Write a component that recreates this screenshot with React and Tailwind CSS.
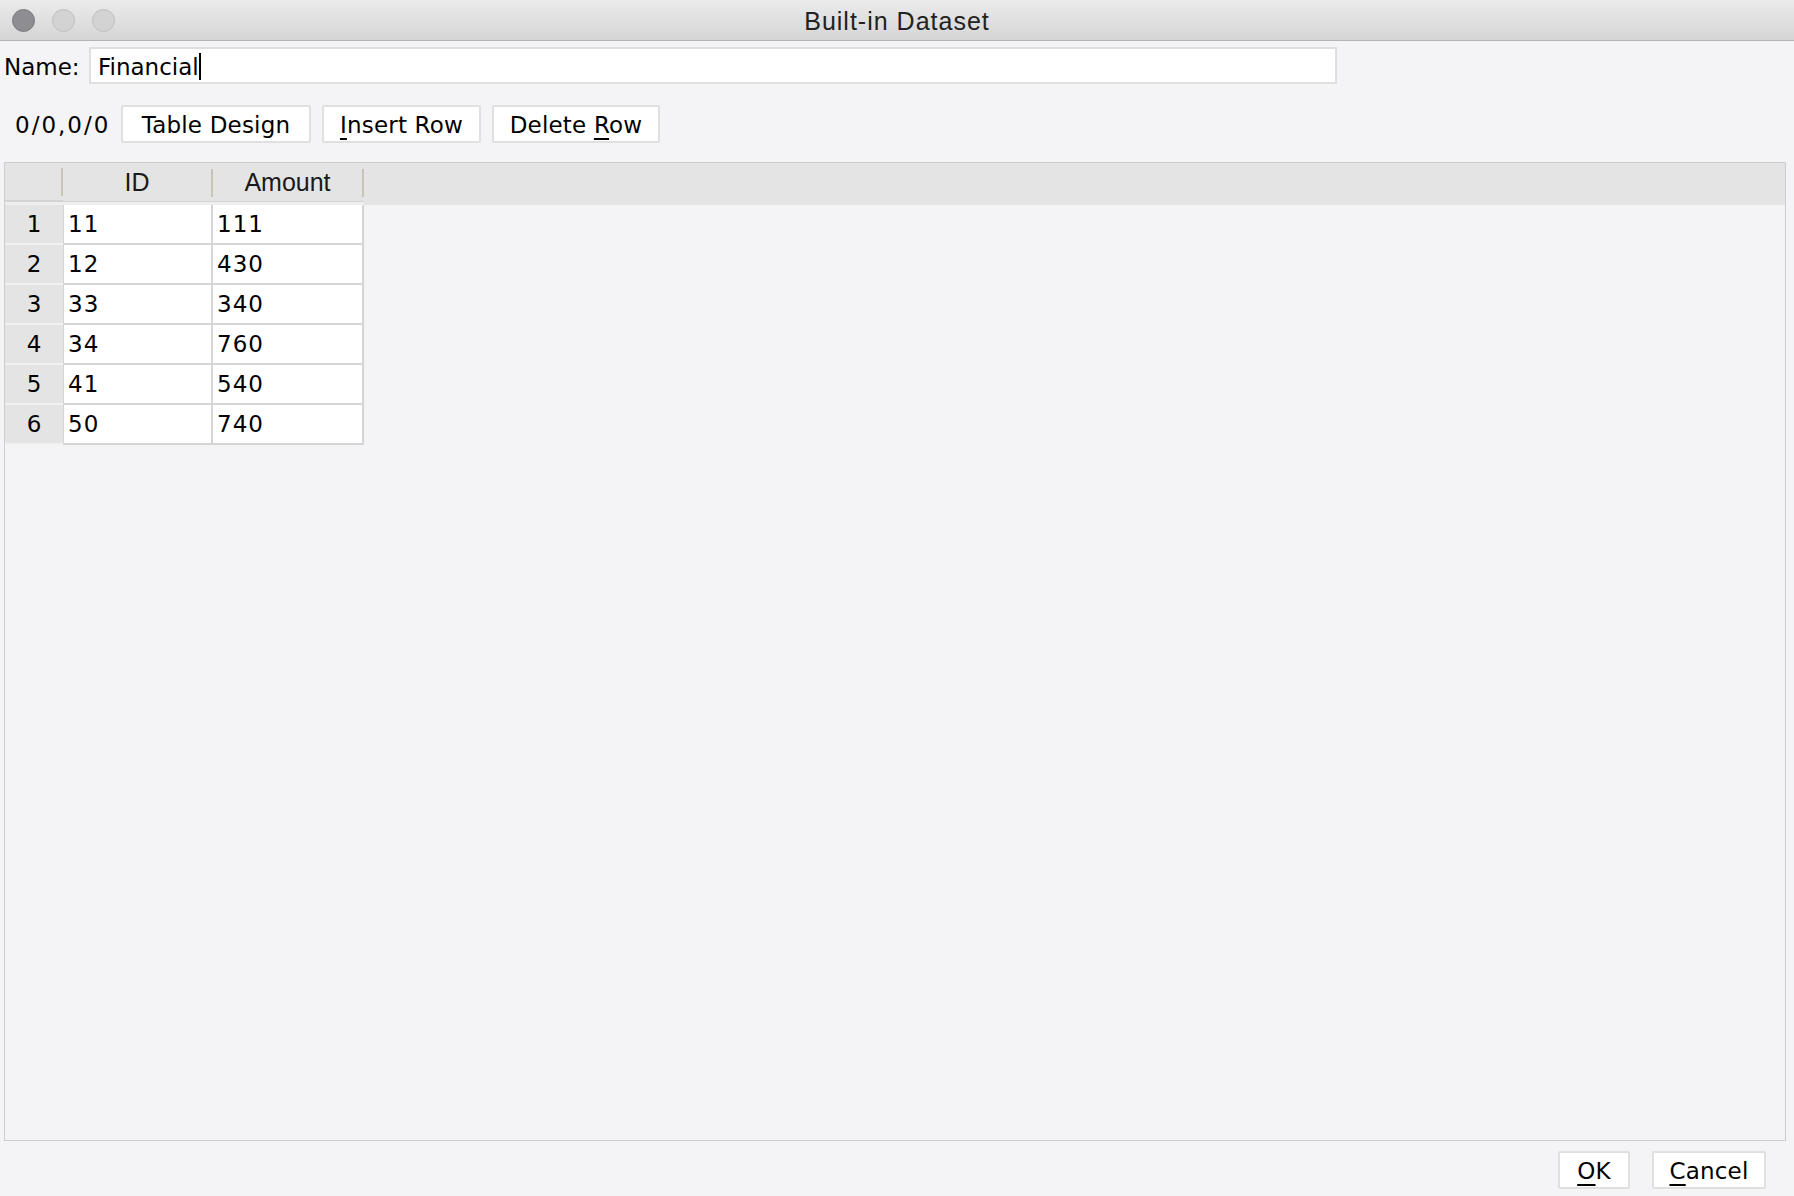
import React from 'react';

const rows = [
  ['1', '11', '111'],
  ['2', '12', '430'],
  ['3', '33', '340'],
  ['4', '34', '760'],
  ['5', '41', '540'],
  ['6', '50', '740'],
];

// mnemonic letter, underlined like a Swing button
const Mn = ({ children }) => (
  <span className="underline decoration-2 underline-offset-[5px]">{children}</span>
);

const SwingButton = ({ width, children }) => (
  <button
    className={`${width} h-[38px] bg-white border-2 border-[#e0e0e0] rounded-[2px] flex items-center justify-center pt-[3px] text-[23px] tracking-[0.2px] text-black`}
  >
    {children}
  </button>
);

const App = () => {
  return (
    <div className="w-[1794px] h-[1196px] bg-[#f4f4f6] flex flex-col font-['DejaVu_Sans',sans-serif] text-black overflow-hidden">
      {/* Title bar */}
      <div className="h-[41px] shrink-0 grid grid-cols-[1fr_auto_1fr] items-center bg-gradient-to-b from-[#ebebeb] to-[#d5d5d5] border-b border-[#b3b3b3]">
        <div className="flex items-center gap-[17px] pl-[12px]">
          <span className="w-[23px] h-[23px] rounded-full bg-[#8e8e92] border border-[#7b7b80]" />
          <span className="w-[23px] h-[23px] rounded-full bg-[#d3d3d3] border border-[#bebebe]" />
          <span className="w-[23px] h-[23px] rounded-full bg-[#d3d3d3] border border-[#bebebe]" />
        </div>
        <div className="pt-[3px] font-['Liberation_Sans',Arial,sans-serif] text-[25px] tracking-[0.04em] text-[#222]">
          Built-in Dataset
        </div>
        <div />
      </div>

      {/* Name field */}
      <div className="flex items-center pt-[6px] pl-[4px]">
        <span className="text-[23px] w-[85px] pt-[3px]">Name:</span>
        <div className="w-[1248px] h-[37px] bg-white border-2 border-[#dfdfdf] flex items-center pl-[7px] pt-[2px] text-[23px]">
          <span>Financial</span>
          <span className="w-[2px] h-[27px] bg-black" />
        </div>
      </div>

      {/* Toolbar */}
      <div className="flex items-center mt-[20px] pl-[15px]">
        <span className="text-[23px] tracking-[2px] w-[106px] pt-[3px]">0/0,0/0</span>
        <div className="flex gap-[11px]">
          <SwingButton width="w-[190px]">Table Design</SwingButton>
          <SwingButton width="w-[159px]"><span><Mn>I</Mn>nsert Row</span></SwingButton>
          <SwingButton width="w-[168px]"><span>Delete <Mn>R</Mn>ow</span></SwingButton>
        </div>
      </div>

      {/* Table scroll pane */}
      <div className="mt-[19px] ml-[4px] w-[1782px] h-[979px] shrink-0 border border-[#cdcdcd] flex flex-col">
        <div className="h-[42px] bg-[#e4e4e4] flex">
          {[
            ['w-[58px]', ''],
            ['w-[150px]', 'ID'],
            ['w-[151px]', 'Amount'],
          ].map(([w, label], i) => (
            <div key={i} className={`${w} flex flex-col`}>
              <div className="flex-1 flex items-center">
                <div className="flex-1 text-center pt-[1px] font-['Liberation_Sans',Arial,sans-serif] text-[25px] text-[#1a1a1a]">
                  {label}
                </div>
                <div className="w-[2px] h-[28px] mt-[2px] bg-[#c8c4b8]" />
              </div>
              <div className="h-[2px] bg-[#d4d4d4]" />
              <div className="h-[3px] bg-[#eeeeee]" />
            </div>
          ))}
        </div>

        <div className="flex flex-col">
          {rows.map(([n, id, amount]) => (
            <div key={n} className="flex h-[40px]">
              <div className="w-[58px] bg-[#e4e4e4] border-b-2 border-[#f1f1f1] flex items-center justify-center pt-[2px] text-[23px]">
                {n}
              </div>
              <div className="w-[150px] bg-white border-l border-r-2 border-b-2 border-[#d5d5d5] flex items-center pl-[4px] pt-[2px] text-[23px] tracking-[1px]">
                {id}
              </div>
              <div className="w-[151px] bg-white border-r-2 border-b-2 border-[#d5d5d5] flex items-center pl-[4px] pt-[2px] text-[23px] tracking-[1px]">
                {amount}
              </div>
            </div>
          ))}
        </div>
      </div>

      {/* Dialog buttons */}
      <div className="flex justify-end gap-[22px] mt-[10px] pr-[28px]">
        <SwingButton width="w-[72px]"><span><Mn>O</Mn>K</span></SwingButton>
        <SwingButton width="w-[114px]"><span><Mn>C</Mn>ancel</span></SwingButton>
      </div>
    </div>
  );
};

export default App;
